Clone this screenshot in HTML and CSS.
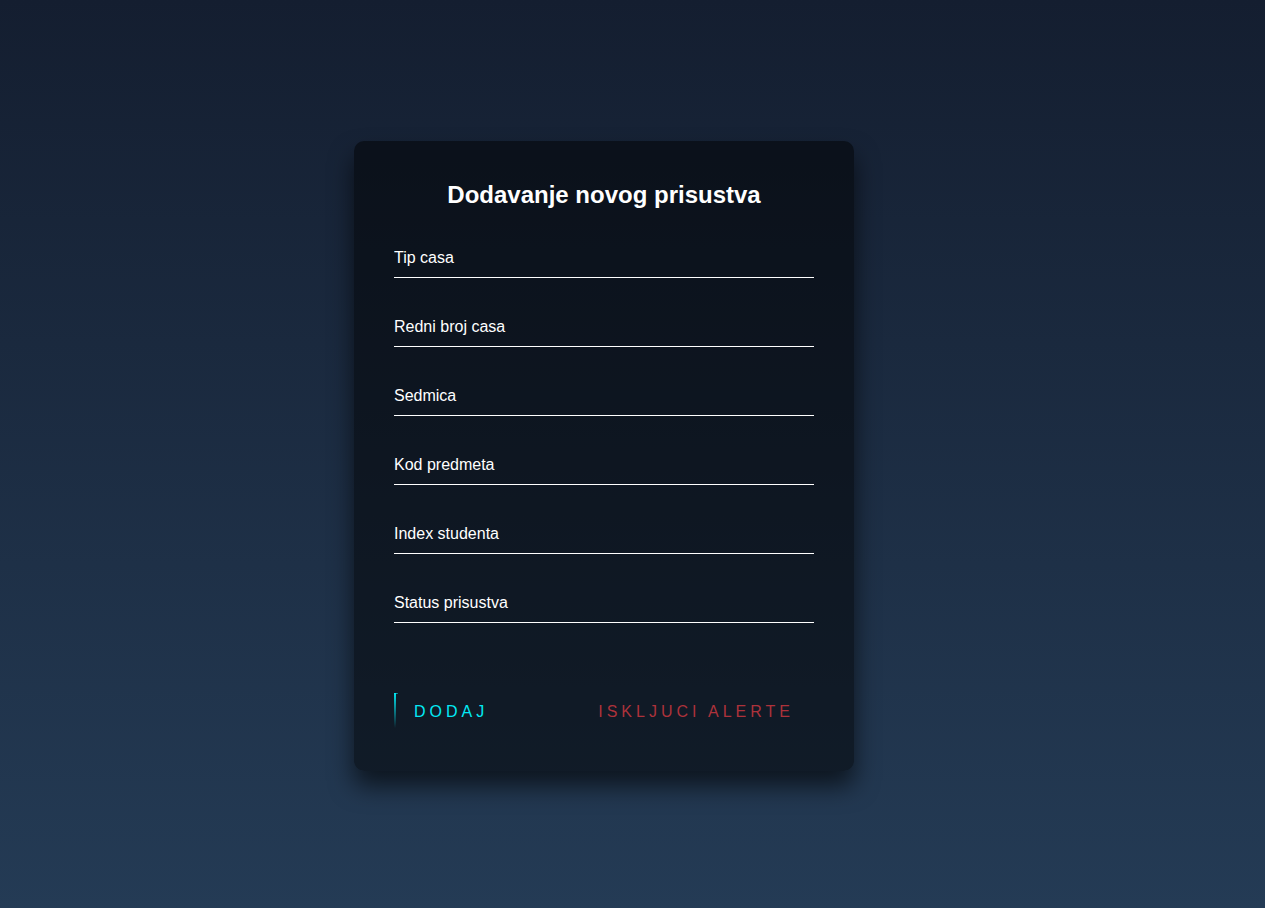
FILE: index.html
```html
<!DOCTYPE html>
<html lang="sr">
<head>
<meta charset="utf-8">
<title>Dodavanje novog prisustva</title>
<link rel="stylesheet" href="styles.css">
</head>
<body>
<div class="page">
  <div class="login-box">
    <h2>Dodavanje novog prisustva</h2>
    <form>
      <div class="user-box"><input type="text" placeholder="Tip casa"></div>
      <div class="user-box"><input type="text" placeholder="Redni broj casa"></div>
      <div class="user-box"><input type="text" placeholder="Sedmica"></div>
      <div class="user-box"><input type="text" placeholder="Kod predmeta"></div>
      <div class="user-box"><input type="text" placeholder="Index studenta"></div>
      <div class="user-box"><input type="text" placeholder="Status prisustva"></div>
      <div class="actions">
        <a class="btn btn-add" href="#"><span class="line-top"></span><span class="line-left"></span>Dodaj</a>
        <a class="btn btn-off" href="#">Iskljuci alerte</a>
      </div>
    </form>
  </div>
</div>
</body>
</html>
```
FILE: styles.css
```css
html, body {
  margin: 0;
  padding: 0;
  height: 100%;
}
body {
  font-family: "Liberation Sans", Arial, sans-serif;
  background: linear-gradient(#141e30, #243b55);
}
.page {
  height: 908px;
  display: flex;
  align-items: center;
  justify-content: center;
  padding-right: 57px;
  padding-top: 4px;
  box-sizing: border-box;
}
.login-box {
  width: 500px;
  padding: 40px;
  box-sizing: border-box;
  background: rgba(0, 0, 0, 0.5);
  box-shadow: 0 15px 25px rgba(0, 0, 0, 0.6);
  border-radius: 10px;
}
.login-box h2 {
  margin: 0 0 30px;
  padding: 0;
  color: #fff;
  text-align: center;
  font-size: 24px;
  font-weight: bold;
}
.user-box {
  padding-bottom: 30px;
}
.user-box input {
  display: block;
  width: 100%;
  padding: 10px 0;
  font-size: 16px;
  font-family: "Liberation Sans", Arial, sans-serif;
  color: #fff;
  margin: 0;
  border: none;
  border-bottom: 1px solid #fff;
  outline: none;
  background: transparent;
  line-height: 18px;
  height: 39px;
  box-sizing: border-box;
}
.user-box input::placeholder {
  color: #fff;
  opacity: 1;
}
.actions {
  display: flex;
  justify-content: space-between;
  padding-top: 40px;
}
.btn {
  position: relative;
  display: inline-block;
  padding: 10px 20px;
  font-size: 16px;
  line-height: 18px;
  text-decoration: none;
  text-transform: uppercase;
  letter-spacing: 4px;
  overflow: hidden;
}
.btn-add {
  color: #03e9f4;
}
.btn-off {
  color: #ad323b;
}
.line-left {
  position: absolute;
  left: 0;
  top: -1px;
  width: 2px;
  height: 36px;
  background: linear-gradient(180deg, #03e9f4, transparent);
}
.line-top {
  position: absolute;
  left: 0;
  top: -1px;
  width: 4px;
  height: 2px;
  background: linear-gradient(90deg, #03e9f4, rgba(3, 233, 244, 0.4));
}
```
